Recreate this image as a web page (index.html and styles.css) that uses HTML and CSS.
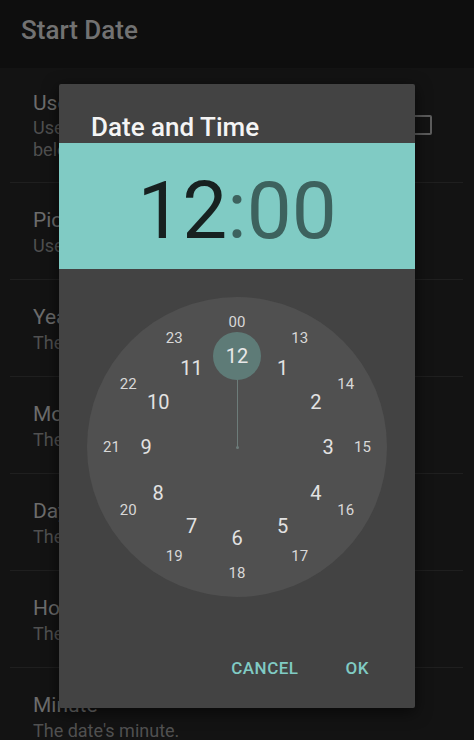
FILE: index.html
```html
<!DOCTYPE html>
<html>
<head>
<meta charset="utf-8">
<link rel="stylesheet" href="styles.css">
</head>
<body>
<div class="screen">
  <header class="appbar">Start Date</header>
  <ul class="prefs">
    <li class="pref pref-first">
      <div class="pref-text">
        <div class="pref-title">Use current date</div>
        <div class="pref-sub">Use the current date instead of the values<br>below</div>
      </div>
      <span class="checkbox"></span>
    </li>
    <li class="pref">
      <div class="pref-text">
        <div class="pref-title">Pick date and time</div>
        <div class="pref-sub">Use the picker to choose the date.</div>
      </div>
    </li>
    <li class="pref">
      <div class="pref-text">
        <div class="pref-title">Year</div>
        <div class="pref-sub">The date's year.</div>
      </div>
    </li>
    <li class="pref">
      <div class="pref-text">
        <div class="pref-title">Month</div>
        <div class="pref-sub">The date's month.</div>
      </div>
    </li>
    <li class="pref">
      <div class="pref-text">
        <div class="pref-title">Day</div>
        <div class="pref-sub">The date's day.</div>
      </div>
    </li>
    <li class="pref">
      <div class="pref-text">
        <div class="pref-title">Hour</div>
        <div class="pref-sub">The date's hour.</div>
      </div>
    </li>
    <li class="pref">
      <div class="pref-text">
        <div class="pref-title">Minute</div>
        <div class="pref-sub">The date's minute.</div>
      </div>
    </li>
  </ul>

  <div class="dialog">
    <div class="dialog-title">Date and Time</div>
    <div class="time-header"><span class="t-hour">12</span><span class="t-sep">:</span><span class="t-min">00</span></div>
    <div class="dial">
      <div class="hand"></div>
      <div class="hand-dot"></div>
      <div class="selector"></div>
      <span class="n n-out" style="left:150px;top:24.5px">00</span>
      <span class="n n-out" style="left:212.75px;top:41.3px">13</span>
      <span class="n n-out" style="left:258.7px;top:87.25px">14</span>
      <span class="n n-out" style="left:275.5px;top:150px">15</span>
      <span class="n n-out" style="left:258.7px;top:212.75px">16</span>
      <span class="n n-out" style="left:212.75px;top:258.7px">17</span>
      <span class="n n-out" style="left:150px;top:275.5px">18</span>
      <span class="n n-out" style="left:87.25px;top:258.7px">19</span>
      <span class="n n-out" style="left:41.3px;top:212.75px">20</span>
      <span class="n n-out" style="left:24.5px;top:150px">21</span>
      <span class="n n-out" style="left:41.3px;top:87.25px">22</span>
      <span class="n n-out" style="left:87.25px;top:41.3px">23</span>
      <span class="n n-in" style="left:195.5px;top:71.2px">1</span>
      <span class="n n-in" style="left:228.8px;top:104.5px">2</span>
      <span class="n n-in" style="left:241px;top:150px">3</span>
      <span class="n n-in" style="left:228.8px;top:195.5px">4</span>
      <span class="n n-in" style="left:195.5px;top:228.8px">5</span>
      <span class="n n-in" style="left:150px;top:241px">6</span>
      <span class="n n-in" style="left:104.5px;top:228.8px">7</span>
      <span class="n n-in" style="left:71.2px;top:195.5px">8</span>
      <span class="n n-in" style="left:59px;top:150px">9</span>
      <span class="n n-in" style="left:71.2px;top:104.5px">10</span>
      <span class="n n-in" style="left:104.5px;top:71.2px">11</span>
      <span class="n n-in n-sel" style="left:150px;top:59px">12</span>
    </div>
    <div class="actions">
      <span class="btn">CANCEL</span>
      <span class="btn">OK</span>
    </div>
  </div>
</div>
</body>
</html>
```
FILE: styles.css
```css
* { box-sizing: border-box; }
html, body {
  margin: 0;
  padding: 0;
  background: #131313;
  font-family: Roboto, "Noto Sans", "Liberation Sans", sans-serif;
}
.screen {
  position: relative;
  width: 474px;
  height: 740px;
  overflow: hidden;
  background: #131313;
}
.appbar {
  height: 68px;
  background: #0e0e0e;
  color: #727272;
  font-size: 26px;
  font-weight: 500;
  line-height: 30px;
  padding: 15px 0 0 21px;
}
.prefs {
  list-style: none;
  margin: 0;
  padding: 0 11px 0 10px;
}
.pref {
  display: flex;
  align-items: center;
  padding: 23px 31px 21px 23px;
  border-bottom: 1px solid #1f1f1f;
}
.pref-first {
  padding-top: 21px;
}
.pref-text {
  flex: 1;
  min-width: 0;
}
.pref-title {
  font-size: 21px;
  line-height: 28px;
  color: #6c6c6c;
  white-space: nowrap;
}
.pref-sub {
  font-size: 18px;
  line-height: 24px;
  color: #505050;
  white-space: nowrap;
}
.pref-first .pref-sub {
  line-height: 22px;
}
.checkbox {
  width: 19px;
  height: 20px;
  border: 2px solid #5c5c5c;
  border-radius: 2px;
  flex: none;
}

.dialog {
  position: absolute;
  left: 59px;
  top: 84px;
  width: 356px;
  height: 624px;
  background: #434343;
  border-radius: 2px;
  box-shadow: 0 4px 16px rgba(0,0,0,0.6);
  display: flex;
  flex-direction: column;
  align-items: center;
}
.dialog-title {
  align-self: stretch;
  padding: 28px 0 1px 32px;
  font-size: 26px;
  line-height: 30px;
  font-weight: 500;
  color: #f4f4f4;
}
.time-header {
  align-self: stretch;
  height: 126px;
  padding-top: 10px;
  background: #80cbc4;
  text-align: center;
  font-size: 80px;
  line-height: 116px;
  font-weight: 400;
  white-space: nowrap;
}
.t-hour { color: #172120; }
.t-sep, .t-min { color: #3d625e; }

.dial {
  position: relative;
  width: 300px;
  height: 300px;
  margin-top: 28px;
  border-radius: 50%;
  background: #505050;
  flex: none;
}
.selector {
  position: absolute;
  left: 126px;
  top: 35px;
  width: 48px;
  height: 48px;
  border-radius: 50%;
  background: #5e7b77;
}
.hand {
  position: absolute;
  left: 149.5px;
  top: 82px;
  width: 1px;
  height: 68px;
  background: #6d7c7a;
}
.hand-dot {
  position: absolute;
  left: 148.5px;
  top: 148.5px;
  width: 3px;
  height: 3px;
  border-radius: 50%;
  background: #6d7c7a;
}
.n {
  position: absolute;
  transform: translate(-50%, -50%);
  line-height: 1;
  color: #e2e2e2;
  white-space: nowrap;
}
.n-in { font-size: 20px; }
.n-out { font-size: 15px; color: #d8d8d8; }
.n-sel { color: #e8e8e8; }

.actions {
  margin-top: auto;
  align-self: stretch;
  display: flex;
  justify-content: flex-end;
  gap: 47px;
  padding: 0 46px 30px 0;
}
.btn {
  font-size: 17px;
  line-height: 20px;
  font-weight: 500;
  letter-spacing: 0.5px;
  color: #80cbc4;
}
```
